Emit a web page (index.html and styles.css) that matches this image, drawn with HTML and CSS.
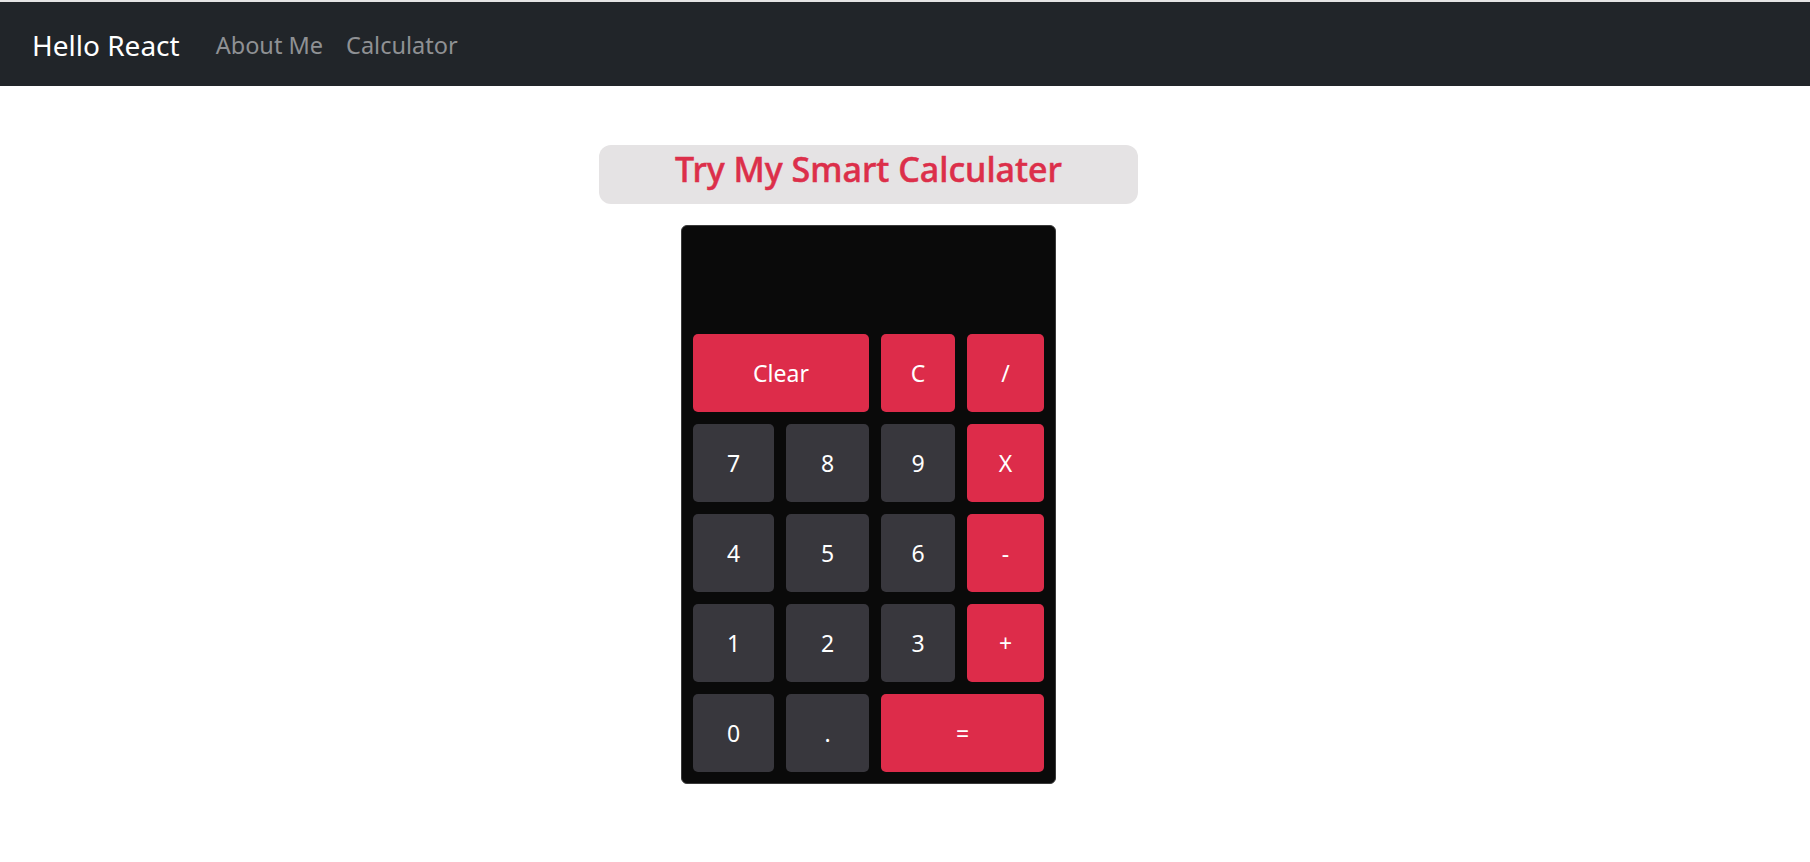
FILE: index.html
```html
<!DOCTYPE html>
<html lang="en">
<head>
<meta charset="utf-8">
<title>Hello React</title>
<link rel="stylesheet" href="styles.css">
</head>
<body>
<div class="topline"></div>
<nav class="navbar">
  <a class="brand" href="#">Hello React</a>
  <a class="nav-link" href="#">About Me</a>
  <a class="nav-link" href="#">Calculator</a>
</nav>
<main class="main">
  <div class="title-box"><h4 class="title">Try My Smart Calculater</h4></div>
  <div class="calc">
    <div class="display"></div>
    <button class="btn red span2">Clear</button>
    <button class="btn red">C</button>
    <button class="btn red">/</button>
    <button class="btn dark">7</button>
    <button class="btn dark">8</button>
    <button class="btn dark">9</button>
    <button class="btn red">X</button>
    <button class="btn dark">4</button>
    <button class="btn dark">5</button>
    <button class="btn dark">6</button>
    <button class="btn red">-</button>
    <button class="btn dark">1</button>
    <button class="btn dark">2</button>
    <button class="btn dark">3</button>
    <button class="btn red">+</button>
    <button class="btn dark">0</button>
    <button class="btn dark">.</button>
    <button class="btn red span2">=</button>
  </div>
</main>
</body>
</html>
```
FILE: styles.css
```css
* { box-sizing: border-box; }
html, body { margin: 0; padding: 0; }
body {
  background: #ffffff;
  font-family: "Noto Sans", "Open Sans", sans-serif;
  color: #212529;
}
.topline { height: 2px; background: #e4e4e4; }
.navbar {
  height: 84px;
  background: #212529;
  display: flex;
  align-items: center;
  padding-left: 32px;
}
.brand {
  color: #ffffff;
  text-decoration: none;
  font-size: 28px;
  margin-right: 24px;
  position: relative;
  top: 1px;
}
.nav-link {
  color: #8f9194;
  text-decoration: none;
  font-size: 23.5px;
  padding: 0 12px;
  position: relative;
  top: 1px;
}
.nav-link + .nav-link { padding-left: 11px; }
.main {
  display: flex;
  flex-direction: column;
  align-items: center;
  padding: 59px 73px 0 0;
}
.title-box {
  width: 539px;
  height: 59px;
  background: #e5e3e4;
  border-radius: 12px;
  display: flex;
  align-items: center;
  justify-content: center;
}
.title {
  margin: 0;
  color: #dc2f4a;
  font-size: 34px;
  font-weight: 500;
  -webkit-text-stroke: 0.5px #dc2f4a;
  line-height: 1;
  position: relative;
  top: -6px;
}
.calc {
  margin-top: 21px;
  width: 375px;
  background: #0a0a0a;
  border: 1px solid #3a3a3a;
  border-radius: 6px;
  padding: 11px;
  display: grid;
  grid-template-columns: 81px 83px 74px 77px;
  grid-template-rows: 85px;
  grid-auto-rows: 78px;
  column-gap: 12px;
  row-gap: 12px;
}
.display {
  grid-column: 1 / 5;
  background: #0a0a0a;
}
.btn {
  border: none;
  border-radius: 5px;
  color: #ffffff;
  font-family: "Noto Sans", "Open Sans", sans-serif;
  font-size: 23px;
  padding: 0;
  cursor: pointer;
}
.red { background: #dd2c4a; }
.dark { background: #38373d; }
.span2 { grid-column: span 2; }
```
